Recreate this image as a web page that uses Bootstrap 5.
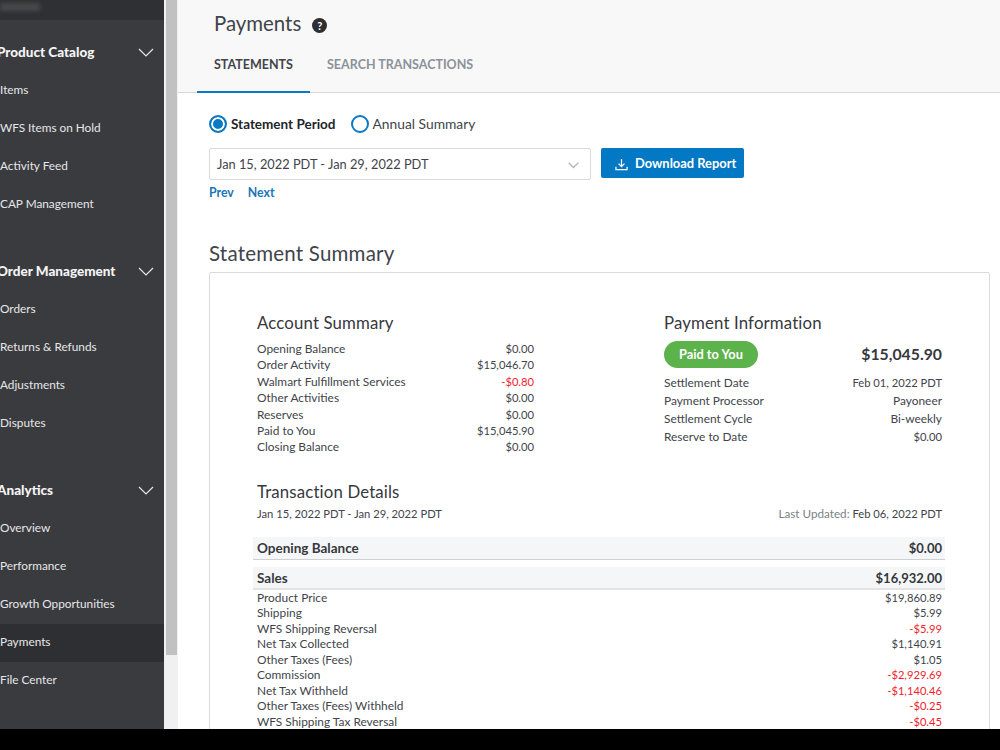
<!doctype html>
<html lang="en">
<head>
    <meta charset="utf-8">
    <meta name="viewport" content="width=device-width, initial-scale=1">
    <title>Payments</title>
    <link href="https://cdn.jsdelivr.net/npm/bootstrap@5.3.3/dist/css/bootstrap.min.css" rel="stylesheet">
    <style>
        html, body { height: 750px; overflow: hidden; }
        body { background: #000; font-family: "Lato", "Noto Sans", sans-serif; color: #41444a; font-size: 11.9px; }
        .app-shell { height: 729px; overflow: hidden; background: #fff; }

        .side-panel { width: 164px; background: #3a3b3f; color: #eceded; flex: none; font-size: 11.8px; }
        .side-top { height: 20px; background: #2f3033; padding: 3px 0 0 0; }
        .side-blur { width: 40px; height: 8px; background: #47484b; filter: blur(2px); }
        .side-group { padding-top: 21px; height: 219px; }
        .side-head { height: 22px; margin-left: -3px; padding-right: 10px; font-weight: 900; font-size: 13.5px; color: #f4f4f4; white-space: nowrap; }
        .side-link { height: 38px; padding-bottom: 2px; display: flex; align-items: center; white-space: nowrap; color: #e6e7e8; text-decoration: none; }
        .side-link.is-active { background: #2e2f32; }
        .side-list { margin-top: 9px; }

        .scroll-track { width: 14px; background: #f0f0f0; flex: none; }
        .scroll-thumb { height: 655px; width: 11px; margin-left: 2px; background: #c1c1c1; }

        .main-pane { width: 822px; flex: none; }
        .page-head { height: 93px; background: #f8f8f8; border-bottom: 1px solid #d6d7d9; padding: 0 0 0 19px; }
        .page-title { font-size: 20.4px; line-height: 27px; margin: 10px 0 0 17px; font-weight: 400; color: #41444a; }
        .help-dot { width: 15px; height: 15px; border-radius: 50%; background: #2e2f32; color: #fff; font-size: 11px; font-weight: 700; line-height: 15px; text-align: center; margin: 14px 0 0 11px; }
        .head-tabs { margin-top: 6px; }
        .head-tab { height: 50px; padding: 13px 0 0 17px; font-size: 12.5px; font-weight: 700; color: #8b9198; white-space: nowrap; }
        .head-tab.is-on { width: 113px; color: #41444a; border-bottom: 2px solid #0b79c2; }

        .page-body { padding: 0 11px 0 31px; }
        .radio-row { margin-top: 21px; height: 20px; font-size: 13.5px; gap: 15px; }
        .radio-mark { width: 18px; height: 18px; border-radius: 50%; border: 2px solid #0b79c2; margin-right: 4px; flex: none; }
        .radio-mark.is-set { background: #0b79c2; box-shadow: inset 0 0 0 2px #fff; }
        .annual-label { font-size: 13.8px; }
        .select-row { margin-top: 14px; gap: 10px; }
        .date-select { width: 382px; height: 32px; border: 1px solid #d9dadc; border-radius: 2px; padding: 2px 7px 0; font-size: 12.8px; color: #41444a; }
        .dl-button { width: 143px; height: 30px; padding: 2px 0 0 14px; border: 0; border-radius: 2px; background: #0378c4; color: #fff; font-size: 12.9px; font-weight: 700; gap: 7px; }
        .pager-row { margin-top: 5px; gap: 14px; height: 16px; line-height: 16px; }
        .pager-row a { color: #1a76b8; font-weight: 700; text-decoration: none; font-size: 12.3px; }
        .sum-title { font-size: 20.5px; line-height: 26px; font-weight: 400; margin: 39px 0 6px; color: #41444a; letter-spacing: .2px; }

        .sheet { width: 781px; height: 520px; border: 1px solid #d9dadc; border-radius: 2px; padding: 39px 47px 0 47px; }
        .block-title { font-size: 16.8px; line-height: 22px; font-weight: 400; margin: 0; color: #36383d; letter-spacing: .15px; }
        .acct-col { width: 277px; margin-right: 130px; }
        .acct-rows { margin-top: 7px; }
        .acct-line { height: 16.4px; line-height: 16.4px; }
        .pay-col { width: 278px; }
        .paid-pill { width: 94px; height: 27px; border-radius: 14px; background: #5cb34b; color: #fff; font-weight: 700; font-size: 12.8px; line-height: 27px; text-align: center; }
        .paid-total { font-size: 15.8px; font-weight: 700; color: #36383d; }
        .pay-line { height: 18px; line-height: 18px; }
        .pay-top { margin-top: 6px; margin-bottom: 6px; height: 28px; }
        .money-val { font-size: 11.2px; }
        .neg-amt { color: #f01e2c; }
        .trans-block { margin-top: 25px; }
        .trans-sub { margin-top: 2px; height: 17px; line-height: 17px; font-size: 11.2px; }
        .muted-label { color: #7a7f86; font-size: 11.7px; }
        .band-row { background: #f5f6f8; border-bottom: 1px solid #cfd0d2; height: 23px; line-height: 22px; font-size: 13.5px; font-weight: 700; padding: 0 3px 0 4px; margin-left: -4px; margin-right: -3px; color: #36383d; }
        .band-amt { font-size: 13px; }
        .band-open { margin-top: 15px; }
        .band-sales { margin-top: 7px; border-bottom: 2px solid #e2e3e5; }
        .detail-line { height: 15.5px; line-height: 15.5px; }
        .detail-rows { margin-top: 0; }
    </style>
</head>
<body>
    <div class="app-shell d-flex">
        <aside class="side-panel">
            <div class="side-top"><div class="side-blur"></div></div>

            <div class="side-group">
                <div class="side-head d-flex justify-content-between align-items-center">Product Catalog
                    <svg width="16" height="9" viewBox="0 0 16 9" fill="none" stroke="#e6e7e8" stroke-width="1.2"><path d="M1 1l7 7 7-7"/></svg>
                </div>
                <div class="side-list">
                    <a class="side-link">Items</a>
                    <a class="side-link">WFS Items on Hold</a>
                    <a class="side-link">Activity Feed</a>
                    <a class="side-link">CAP Management</a>
                </div>
            </div>

            <div class="side-group">
                <div class="side-head d-flex justify-content-between align-items-center">Order Management
                    <svg width="16" height="9" viewBox="0 0 16 9" fill="none" stroke="#e6e7e8" stroke-width="1.2"><path d="M1 1l7 7 7-7"/></svg>
                </div>
                <div class="side-list">
                    <a class="side-link">Orders</a>
                    <a class="side-link">Returns &amp; Refunds</a>
                    <a class="side-link">Adjustments</a>
                    <a class="side-link">Disputes</a>
                </div>
            </div>

            <div class="side-group">
                <div class="side-head d-flex justify-content-between align-items-center">Analytics
                    <svg width="16" height="9" viewBox="0 0 16 9" fill="none" stroke="#e6e7e8" stroke-width="1.2"><path d="M1 1l7 7 7-7"/></svg>
                </div>
                <div class="side-list">
                    <a class="side-link">Overview</a>
                    <a class="side-link">Performance</a>
                    <a class="side-link">Growth Opportunities</a>
                    <a class="side-link is-active">Payments</a>
                    <a class="side-link">File Center</a>
                </div>
            </div>
        </aside>

        <div class="scroll-track"><div class="scroll-thumb"></div></div>

        <main class="main-pane">
            <header class="page-head">
                <div class="d-flex align-items-center">
                    <h1 class="page-title">Payments</h1>
                    <span class="help-dot">?</span>
                </div>
                <div class="head-tabs d-flex">
                    <div class="head-tab is-on">STATEMENTS</div>
                    <div class="head-tab">SEARCH TRANSACTIONS</div>
                </div>
            </header>

            <div class="page-body">
                <div class="radio-row d-flex align-items-center">
                    <div class="d-flex align-items-center fw-bold text-dark"><span class="radio-mark is-set"></span>Statement Period</div>
                    <div class="annual-label d-flex align-items-center"><span class="radio-mark"></span>Annual Summary</div>
                </div>

                <div class="select-row d-flex align-items-start">
                    <div class="date-select d-flex justify-content-between align-items-center">
                        <span>Jan 15, 2022 PDT - Jan 29, 2022 PDT</span>
                        <svg class="me-1" width="11" height="7" viewBox="0 0 11 7" fill="none" stroke="#b4b6b9" stroke-width="1.3"><path d="M.7.7l4.8 4.8L10.3.7"/></svg>
                    </div>
                    <button type="button" class="dl-button btn d-flex align-items-center justify-content-start">
                        <svg width="13" height="13" viewBox="0 0 14 14" fill="none" stroke="#fff" stroke-width="1.3"><path d="M7 1v8M3.8 6L7 9.2 10.2 6M1 9.5v3h12v-3"/></svg>
                        Download Report
                    </button>
                </div>

                <div class="pager-row d-flex"><a href="#">Prev</a><a href="#">Next</a></div>

                <h2 class="sum-title">Statement Summary</h2>

                <section class="sheet">
                    <div class="d-flex">
                        <div class="acct-col">
                            <h3 class="block-title">Account Summary</h3>
                            <div class="acct-rows">
                                <div class="acct-line d-flex justify-content-between"><span>Opening Balance</span><span class="money-val">$0.00</span></div>
                                <div class="acct-line d-flex justify-content-between"><span>Order Activity</span><span class="money-val">$15,046.70</span></div>
                                <div class="acct-line d-flex justify-content-between"><span>Walmart Fulfillment Services</span><span class="money-val neg-amt">-$0.80</span></div>
                                <div class="acct-line d-flex justify-content-between"><span>Other Activities</span><span class="money-val">$0.00</span></div>
                                <div class="acct-line d-flex justify-content-between"><span>Reserves</span><span class="money-val">$0.00</span></div>
                                <div class="acct-line d-flex justify-content-between"><span>Paid to You</span><span class="money-val">$15,045.90</span></div>
                                <div class="acct-line d-flex justify-content-between"><span>Closing Balance</span><span class="money-val">$0.00</span></div>
                            </div>
                        </div>
                        <div class="pay-col">
                            <h3 class="block-title">Payment Information</h3>
                            <div class="pay-top d-flex justify-content-between align-items-center">
                                <div class="paid-pill">Paid to You</div>
                                <div class="paid-total">$15,045.90</div>
                            </div>
                            <div class="pay-line d-flex justify-content-between"><span>Settlement Date</span><span class="money-val">Feb 01, 2022 PDT</span></div>
                            <div class="pay-line d-flex justify-content-between"><span>Payment Processor</span><span>Payoneer</span></div>
                            <div class="pay-line d-flex justify-content-between"><span>Settlement Cycle</span><span>Bi-weekly</span></div>
                            <div class="pay-line d-flex justify-content-between"><span>Reserve to Date</span><span class="money-val">$0.00</span></div>
                        </div>
                    </div>

                    <div class="trans-block">
                        <h3 class="block-title">Transaction Details</h3>
                        <div class="trans-sub d-flex justify-content-between">
                            <span>Jan 15, 2022 PDT - Jan 29, 2022 PDT</span>
                            <span><span class="muted-label">Last Updated:</span> Feb 06, 2022 PDT</span>
                        </div>
                        <div class="band-row band-open d-flex justify-content-between"><span>Opening Balance</span><span class="band-amt">$0.00</span></div>
                        <div class="band-row band-sales d-flex justify-content-between"><span>Sales</span><span class="band-amt">$16,932.00</span></div>
                        <div class="detail-rows">
                            <div class="detail-line d-flex justify-content-between"><span>Product Price</span><span class="money-val">$19,860.89</span></div>
                            <div class="detail-line d-flex justify-content-between"><span>Shipping</span><span class="money-val">$5.99</span></div>
                            <div class="detail-line d-flex justify-content-between"><span>WFS Shipping Reversal</span><span class="money-val neg-amt">-$5.99</span></div>
                            <div class="detail-line d-flex justify-content-between"><span>Net Tax Collected</span><span class="money-val">$1,140.91</span></div>
                            <div class="detail-line d-flex justify-content-between"><span>Other Taxes (Fees)</span><span class="money-val">$1.05</span></div>
                            <div class="detail-line d-flex justify-content-between"><span>Commission</span><span class="money-val neg-amt">-$2,929.69</span></div>
                            <div class="detail-line d-flex justify-content-between"><span>Net Tax Withheld</span><span class="money-val neg-amt">-$1,140.46</span></div>
                            <div class="detail-line d-flex justify-content-between"><span>Other Taxes (Fees) Withheld</span><span class="money-val neg-amt">-$0.25</span></div>
                            <div class="detail-line d-flex justify-content-between"><span>WFS Shipping Tax Reversal</span><span class="money-val neg-amt">-$0.45</span></div>
                        </div>
                    </div>
                </section>
            </div>
        </main>
    </div>
    <script src="https://cdn.jsdelivr.net/npm/bootstrap@5.3.3/dist/js/bootstrap.bundle.min.js"></script>
</body>
</html>
